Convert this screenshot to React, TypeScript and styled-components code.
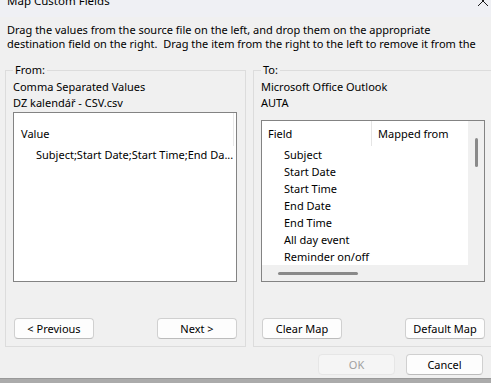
import React from 'react'
import styled, { createGlobalStyle } from 'styled-components'

const GlobalStyle = createGlobalStyle`
	html, body {
		margin: 0;
		padding: 0;
		background: #f0f0f0;
	}
	body {
		font-family: 'Noto Sans', 'Open Sans', sans-serif;
		font-size: 11px;
		color: #000;
	}
`

const fieldRows = [
	'Subject',
	'Start Date',
	'Start Time',
	'End Date',
	'End Time',
	'All day event',
	'Reminder on/off',
]

export default function App() {
	return (
		<>
			<GlobalStyle />
			<Dialog>
				<TitleBar>
					<Title>Map Custom Fields</Title>
					<CloseIcon width="12" height="12" viewBox="0 0 12 12" aria-hidden>
						<path d="M1 1 L11 11 M11 1 L1 11" stroke="#1a1a1a" strokeWidth="1" />
					</CloseIcon>
				</TitleBar>
				<Instructions>
					<Line>
						Drag the values from the source file on the left, and drop them on the
						appropriate
					</Line>
					<Line>
						destination field on the right.&nbsp; Drag the item from the right to the
						left to remove it from the
					</Line>
				</Instructions>

				<Groups>
					<Group>
						<Legend>From:</Legend>
						<Caption>Comma Separated Values</Caption>
						<Caption>DZ kalendář - CSV.csv</Caption>
						<SourceList>
							<SourceHeader>Value</SourceHeader>
							<Row>Subject;Start Date;Start Time;End Da...</Row>
						</SourceList>
						<ButtonRow>
							<Button>&lt; Previous</Button>
							<Button>Next &gt;</Button>
						</ButtonRow>
					</Group>

					<Group>
						<Legend>To:</Legend>
						<Caption>Microsoft Office Outlook</Caption>
						<Caption>AUTA</Caption>
						<TargetList>
							<ListBody>
								<HeaderRow>
									<HeaderCell $width={110} $divider>
										Field
									</HeaderCell>
									<HeaderCell>Mapped from</HeaderCell>
								</HeaderRow>
								{fieldRows.map((r) => (
									<Row key={r}>{r}</Row>
								))}
							</ListBody>
							<VTrack>
								<VThumb />
							</VTrack>
							<HTrack>
								<HThumb />
							</HTrack>
							<Corner />
						</TargetList>
						<ButtonRow>
							<Button>Clear Map</Button>
							<Button>Default Map</Button>
						</ButtonRow>
					</Group>
				</Groups>

				<Footer>
					<Button $disabled $width={77}>
						OK
					</Button>
					<Button $width={77}>Cancel</Button>
				</Footer>
				<Backdrop />
			</Dialog>
		</>
	)
}

const Dialog = styled.div`
	width: 491px;
	height: 383px;
	overflow: hidden;
	display: flex;
	flex-direction: column;
	background: #f0f0f0;
`

const TitleBar = styled.div`
	height: 17px;
	flex: none;
	display: flex;
	justify-content: space-between;
	align-items: flex-start;
	background: #eff0f4;
	padding: 0 2px 0 7px;
	overflow: hidden;
`

const Title = styled.span`
	margin-top: -6px;
	line-height: 14px;
	font-size: 11.5px;
`

const CloseIcon = styled.svg`
	margin-top: -5px;
	flex: none;
`

const Instructions = styled.div`
	padding: 6px 0 0 7px;
	flex: none;
`

const Line = styled.div`
	line-height: 14px;
	white-space: nowrap;
`

const Groups = styled.div`
	display: flex;
	gap: 7px;
	margin: 12px 0 0 5px;
	flex: none;
`

const Group = styled.fieldset`
	box-sizing: border-box;
	flex: none;
	width: 241px;
	height: 284px;
	margin: 0;
	padding: 2px 8px 7px 7px;
	border: 1px solid #dcdcdc;
	display: flex;
	flex-direction: column;
	min-width: 0;
`

const Legend = styled.legend`
	padding: 0 2px;
	line-height: 14px;
`

const Caption = styled.div`
	line-height: 16px;
	white-space: nowrap;
`

const SourceList = styled.div`
	box-sizing: border-box;
	height: 170px;
	margin-top: 1px;
	border: 1px solid #838383;
	background: #fff;
	overflow: hidden;
`

const SourceHeader = styled.div`
	box-sizing: border-box;
	height: 33px;
	padding: 14px 0 0 7px;
	line-height: 14px;
	border-right: 1px solid #e8e8e8;
	margin-right: 2px;
`

const Row = styled.div`
	height: 17px;
	line-height: 17px;
	padding-left: 22px;
	white-space: nowrap;
	overflow: hidden;
`

const TargetList = styled.div`
	box-sizing: border-box;
	height: 162px;
	margin-top: 9px;
	border: 1px solid #838383;
	display: grid;
	grid-template-columns: 1fr 16px;
	grid-template-rows: 1fr 16px;
	background: #f0f0f0;
`

const ListBody = styled.div`
	background: #fff;
	overflow: hidden;
`

const HeaderRow = styled.div`
	display: flex;
	height: 25px;
	align-items: stretch;
`

const HeaderCell = styled.div<{ $width?: number; $divider?: boolean }>`
	box-sizing: border-box;
	width: ${(p) => (p.$width ? `${p.$width}px` : 'auto')};
	flex: ${(p) => (p.$width ? 'none' : '1')};
	padding: 0 0 0 6px;
	display: flex;
	align-items: center;
	white-space: nowrap;
	border-right: ${(p) => (p.$divider ? '1px solid #e5e5e5' : 'none')};
`

const VTrack = styled.div`
	display: flex;
	justify-content: center;
	padding-top: 17px;
	padding-left: 1px;
`

const VThumb = styled.div`
	width: 3px;
	height: 29px;
	border-radius: 2px;
	background: #8a8a8a;
`

const HTrack = styled.div`
	display: flex;
	align-items: center;
	padding-left: 16px;
`

const HThumb = styled.div`
	width: 80px;
	height: 3px;
	border-radius: 2px;
	background: #8a8a8a;
`

const Corner = styled.div`
	background: #f0f0f0;
`

const ButtonRow = styled.div`
	display: flex;
	justify-content: space-between;
	margin-top: auto;
	padding-left: 1px;
`

const Button = styled.button<{ $disabled?: boolean; $width?: number }>`
	box-sizing: border-box;
	width: ${(p) => p.$width ?? 80}px;
	height: 21px;
	padding: 0;
	font-family: inherit;
	font-size: 11px;
	line-height: 19px;
	border-radius: 4px;
	background: ${(p) => (p.$disabled ? '#f5f5f5' : '#fdfdfd')};
	color: ${(p) => (p.$disabled ? '#a0a0a0' : '#000')};
	border: 1px solid ${(p) => (p.$disabled ? '#e6e6e6' : '#d0d0d0')};
	border-bottom-color: ${(p) => (p.$disabled ? '#e6e6e6' : '#bcbcbc')};
`

const Footer = styled.div`
	display: flex;
	justify-content: flex-end;
	gap: 11px;
	padding: 7px 8px 0 0;
	flex: none;
`

const Backdrop = styled.div`
	margin-top: auto;
	height: 4px;
	flex: none;
	background: #ababab;
	border-top: 1px solid #999;
`
